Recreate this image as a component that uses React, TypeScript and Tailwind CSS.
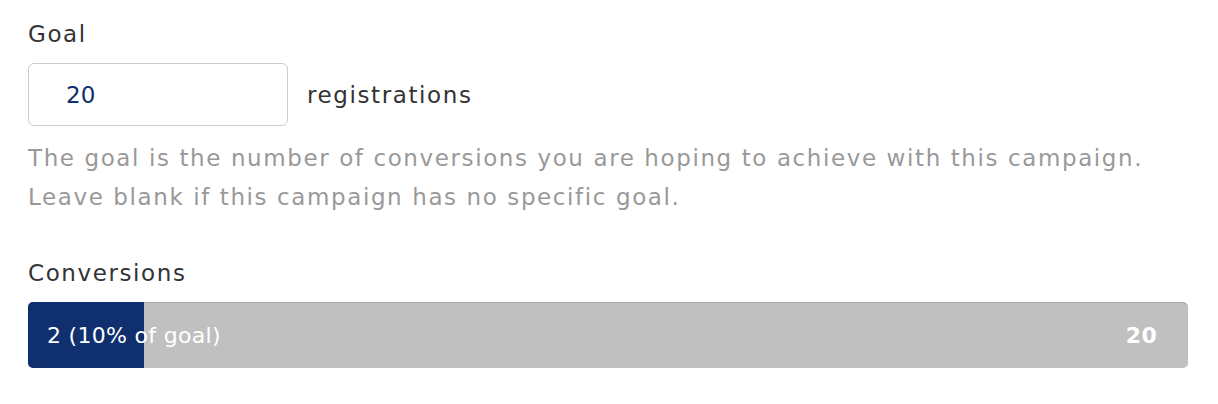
const goal = 20;
const conversions = 2;

export default function App() {
  const pct = Math.round((conversions / goal) * 100);

  return (
    <div
      className="w-[1218px] h-[404px] bg-white pl-[28px] pr-[30px] pt-[14px] text-[23px] tracking-[1.6px] text-[#333333]"
      style={{ fontFamily: '"DejaVu Sans", "Open Sans", sans-serif' }}
    >
      <label className="block leading-[40px]">Goal</label>

      <div className="mt-[9px] flex items-center gap-[19px]">
        <input
          type="text"
          readOnly
          value={goal}
          className="w-[260px] h-[63px] rounded-[6px] border border-[#cccccc] bg-white pl-[37px] text-[23px] tracking-normal text-[#0f2f6e] outline-none"
        />
        <span className="leading-[40px]">registrations</span>
      </div>

      <p className="mt-[13px] leading-[39px] text-[#999999]">
        The goal is the number of conversions you are hoping to achieve with this campaign.
        <br />
        Leave blank if this campaign has no specific goal.
      </p>

      <div className="mt-[37px] leading-[39px]">Conversions</div>

      <div className="relative mt-[9px] h-[66px] overflow-hidden rounded-[5px] bg-[#c0c0c0] shadow-[inset_0_1px_1px_rgba(0,0,0,0.12)]">
        <div className="absolute inset-y-0 left-0 bg-[#0f2f6e]" style={{ width: `${pct}%` }} />
        <div className="relative flex h-full items-center justify-between pl-[19px] pr-[31px] text-[22px] tracking-[0.3px] text-white">
          <span>
            {conversions} ({pct}% of goal)
          </span>
          <span className="font-bold">{goal}</span>
        </div>
      </div>
    </div>
  );
}
